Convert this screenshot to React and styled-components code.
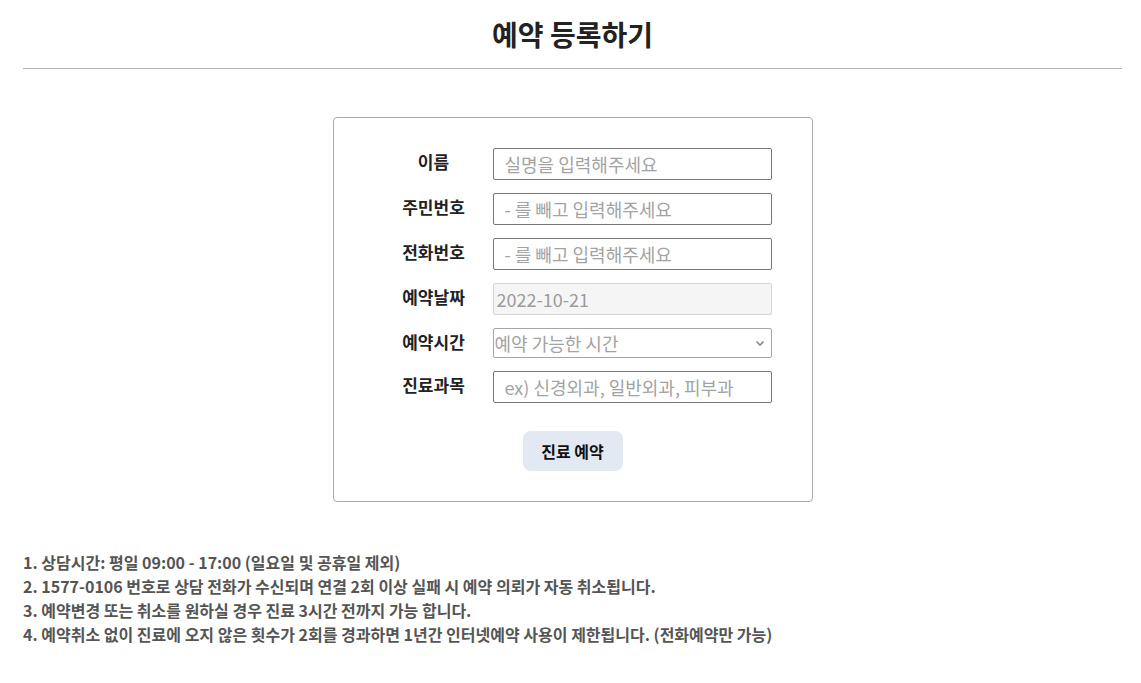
import React from "react";
import styled, { createGlobalStyle } from "styled-components";

const Global = createGlobalStyle`
  html, body { margin: 0; padding: 0; background: #fff; }
  body { font-family: "Noto Sans CJK KR", "Noto Sans", sans-serif; color: #222; }
  * { box-sizing: border-box; }
`;

const Page = styled.div`
  width: 1141px;
  padding: 0 19px 0 23px;
`;

const Header = styled.header`
  padding-top: 12px;
  border-bottom: 1px solid #b4b4b4;
  height: 69px;
  text-align: center;
`;

const Title = styled.h1`
  margin: 0;
  font-size: 28px;
  font-weight: 700;
  line-height: 44px;
  color: #222;
`;

const FormWrap = styled.div`
  display: flex;
  justify-content: center;
  padding-top: 48px;
`;

const Card = styled.form`
  width: 480px;
  border: 1px solid #aaaaaa;
  border-radius: 4px;
  padding: 30px 40px 30px 50px;
  display: flex;
  flex-direction: column;
  gap: 13px;
`;

const Row = styled.div`
  display: grid;
  grid-template-columns: 100px 279px;
  column-gap: 9px;
  align-items: start;
`;

const Label = styled.label`
  text-align: center;
  font-size: 17px;
  font-weight: 700;
  line-height: 28px;
  color: #222;
`;

const Input = styled.input`
  width: 279px;
  height: 32px;
  border: 1px solid #767676;
  border-radius: 2px;
  padding: 0 11px;
  font-family: "Noto Sans CJK KR", "Noto Sans", sans-serif;
  font-size: 18px;
  color: #222;
  background: #fff;
  outline: none;
  &::placeholder { color: #a3a3a3; }
  &:disabled {
    background: #f5f5f5;
    border-color: #d6d6d6;
    color: #9b9b9b;
    padding: 0 3px;
  }
`;

const SelectBox = styled.div`
  position: relative;
  width: 279px;
  height: 30px;
  border: 1px solid #a6a6a6;
  border-radius: 2px;
  display: flex;
  align-items: center;
  padding: 0 1px;
  font-size: 18px;
  color: #a3a3a3;
`;

const Chevron = styled.svg`
  position: absolute;
  right: 6px;
  top: 11px;
`;

const ButtonRow = styled.div`
  display: flex;
  justify-content: center;
  margin-top: 15px;
  margin-left: -10px;
`;

const Button = styled.button`
  width: 100px;
  height: 40px;
  border: none;
  border-radius: 8px;
  background: #e2e9f2;
  font-family: "Noto Sans CJK KR", "Noto Sans", sans-serif;
  font-size: 16px;
  font-weight: 700;
  color: #111;
`;

const Notes = styled.ol`
  list-style: none;
  margin: 0;
  padding: 48px 0 0 0;
`;

const Note = styled.li`
  font-size: 16px;
  font-weight: 700;
  line-height: 24px;
  color: #555;
`;

const notes = [
  "1. 상담시간: 평일 09:00 - 17:00 (일요일 및 공휴일 제외)",
  "2. 1577-0106 번호로 상담 전화가 수신되며 연결 2회 이상 실패 시 예약 의뢰가 자동 취소됩니다.",
  "3. 예약변경 또는 취소를 원하실 경우 진료 3시간 전까지 가능 합니다.",
  "4. 예약취소 없이 진료에 오지 않은 횟수가 2회를 경과하면 1년간 인터넷예약 사용이 제한됩니다. (전화예약만 가능)",
];

export default function App() {
  return (
    <>
      <Global />
      <Page>
        <Header>
          <Title>예약 등록하기</Title>
        </Header>
        <FormWrap>
          <Card onSubmit={(e) => e.preventDefault()}>
            <Row>
              <Label>이름</Label>
              <Input placeholder="실명을 입력해주세요" />
            </Row>
            <Row>
              <Label>주민번호</Label>
              <Input placeholder="- 를 빼고 입력해주세요" />
            </Row>
            <Row>
              <Label>전화번호</Label>
              <Input placeholder="- 를 빼고 입력해주세요" />
            </Row>
            <Row>
              <Label>예약날짜</Label>
              <Input disabled value="2022-10-21" readOnly />
            </Row>
            <Row>
              <Label>예약시간</Label>
              <SelectBox>
                예약 가능한 시간
                <Chevron width="10" height="7" viewBox="0 0 10 7">
                  <path d="M1.5 1.5 L5 5 L8.5 1.5" fill="none" stroke="#8a8a8a" strokeWidth="1.6" />
                </Chevron>
              </SelectBox>
            </Row>
            <Row>
              <Label>진료과목</Label>
              <Input placeholder="ex) 신경외과, 일반외과, 피부과" />
            </Row>
            <ButtonRow>
              <Button type="submit">진료 예약</Button>
            </ButtonRow>
          </Card>
        </FormWrap>
        <Notes>
          {notes.map((n) => (
            <Note key={n}>{n}</Note>
          ))}
        </Notes>
      </Page>
    </>
  );
}
